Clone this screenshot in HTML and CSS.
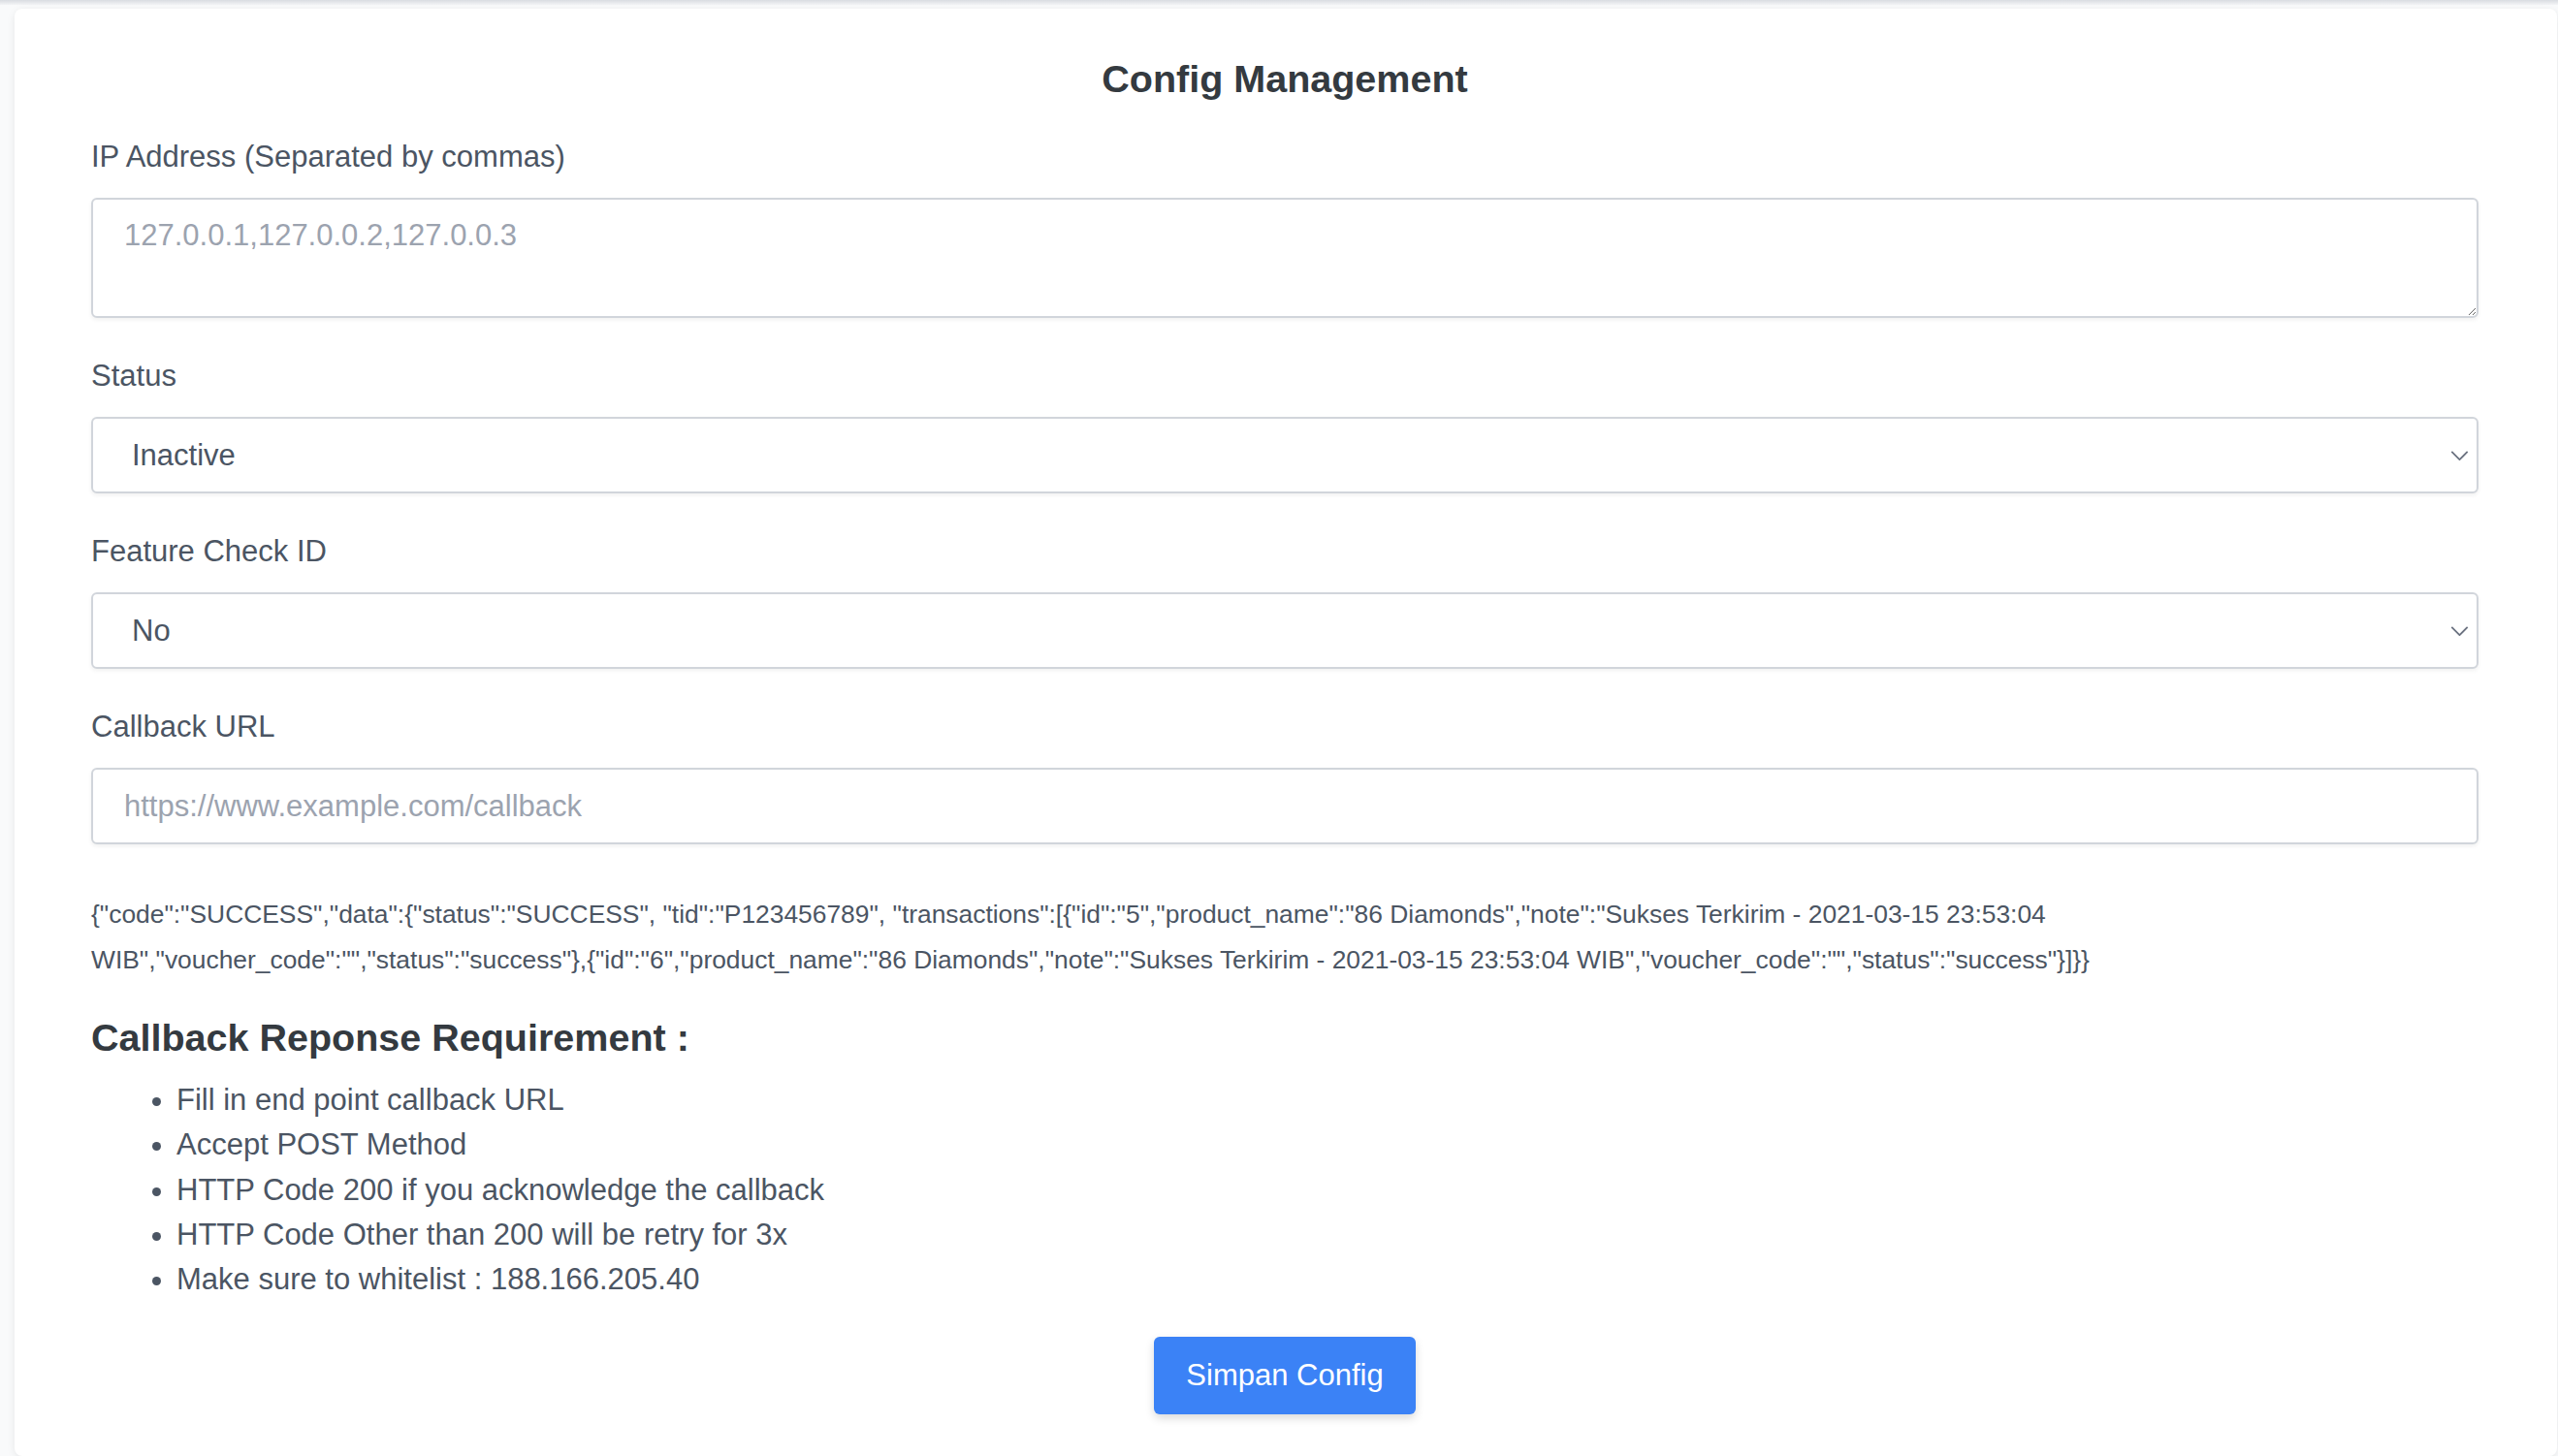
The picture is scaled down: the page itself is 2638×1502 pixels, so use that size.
FILE: index.html
```html
<!DOCTYPE html>
<html>
<head>
  <title>Config Management</title>
  <link rel="stylesheet" href="styles.css">
</head>
<body>
  <div class="topline"></div>
  <div class="card">
    <h1>Config Management</h1>
    <form id="config-form">
      <div class="field">
        <label for="ip">IP Address (Separated by commas)</label>
        <textarea id="ip" placeholder="127.0.0.1,127.0.0.2,127.0.0.3"></textarea>
      </div>
      <div class="field">
        <label for="status">Status</label>
        <div class="select-wrap">
          <select id="status">
            <option value="0">Inactive</option>
            <option value="1">Active</option>
          </select>
          <svg class="chevron" viewBox="0 0 20 11" fill="none" stroke="#6b7280" stroke-width="2">
            <path d="M1 1l9 9 9-9"/>
          </svg>
        </div>
      </div>
      <div class="field">
        <label for="check-id">Feature Check ID</label>
        <div class="select-wrap">
          <select id="check-id">
            <option value="0">No</option>
            <option value="1">Yes</option>
          </select>
          <svg class="chevron" viewBox="0 0 20 11" fill="none" stroke="#6b7280" stroke-width="2">
            <path d="M1 1l9 9 9-9"/>
          </svg>
        </div>
      </div>
      <div class="field">
        <label for="callback">Callback URL</label>
        <input type="text" id="callback" placeholder="https://www.example.com/callback">
      </div>
      <p class="json">{"code":"SUCCESS","data":{"status":"SUCCESS", "tid":"P123456789", "transactions":[{"id":"5","product_name":"86 Diamonds","note":"Sukses Terkirim - 2021-03-15 23:53:04 WIB","voucher_code":"","status":"success"},{"id":"6","product_name":"86 Diamonds","note":"Sukses Terkirim - 2021-03-15 23:53:04 WIB","voucher_code":"","status":"success"}]}}</p>
      <h2>Callback Reponse Requirement :</h2>
      <ul class="rules">
        <li>Fill in end point callback URL</li>
        <li>Accept POST Method</li>
        <li>HTTP Code 200 if you acknowledge the callback</li>
        <li>HTTP Code Other than 200 will be retry for 3x</li>
        <li>Make sure to whitelist : 188.166.205.40</li>
      </ul>
      <div class="actions">
        <button type="submit">Simpan Config</button>
      </div>
    </form>
  </div>
</body>
</html>
```

FILE: styles.css
```css
body {
  font-family: "Liberation Sans", Arial, sans-serif;
  margin: 0;
  background-color: #f9fafb;
  color: #4b5563;
}
.topline {
  height: 5px;
  background: linear-gradient(#d9dce1, #f3f4f6);
}
.card {
  margin: 4px 1px 0 15px;
  padding: 44px 81px 40px 79px;
  background-color: #fff;
  border-radius: 8px;
  box-shadow: 0 2px 8px rgba(0, 0, 0, 0.08);
  min-height: calc(100vh - 9px);
  box-sizing: border-box;
}
h1 {
  margin: 0 0 29px;
  font-size: 39.5px;
  line-height: 56px;
  text-align: center;
  color: #343a40;
}
.field {
  margin-bottom: 36px;
}
label {
  display: block;
  font-size: 31px;
  line-height: 48px;
  margin-bottom: 18px;
  color: #4b5563;
}
textarea, select, input {
  display: block;
  width: 100%;
  box-sizing: border-box;
  font-family: inherit;
  font-size: 31px;
  border: 2px solid #d1d5db;
  border-radius: 6px;
  background-color: #fff;
  box-shadow: 0 2px 4px rgba(0, 0, 0, 0.06);
  color: #4b5563;
  outline: none;
}
textarea {
  height: 124px;
  padding: 15px 32px;
  line-height: 44px;
}
input {
  height: 79px;
  padding: 0 32px;
}
::placeholder {
  color: #9ca3af;
}
.select-wrap {
  position: relative;
}
select {
  height: 79px;
  padding: 0 40px;
  appearance: none;
  -webkit-appearance: none;
}
.chevron {
  position: absolute;
  right: 10px;
  top: 35px;
  width: 19px;
  height: 10px;
  pointer-events: none;
}
.json {
  margin: 49px 0 0;
  font-size: 26.4px;
  line-height: 47px;
  color: #4b5563;
}
h2 {
  margin: 28px 0 0;
  font-size: 39.5px;
  line-height: 56px;
  color: #343a40;
}
.rules {
  margin: 14px 0 0;
  padding-left: 88px;
  font-size: 31px;
  line-height: 46.3px;
}
.actions {
  margin-top: 36px;
  text-align: center;
}
button {
  font-family: inherit;
  font-size: 31px;
  line-height: 46px;
  padding: 17px 33px;
  background-color: #3b82f6;
  color: #fff;
  border: none;
  border-radius: 6px;
  box-shadow: 0 4px 10px rgba(0, 0, 0, 0.15);
  cursor: pointer;
}
```
